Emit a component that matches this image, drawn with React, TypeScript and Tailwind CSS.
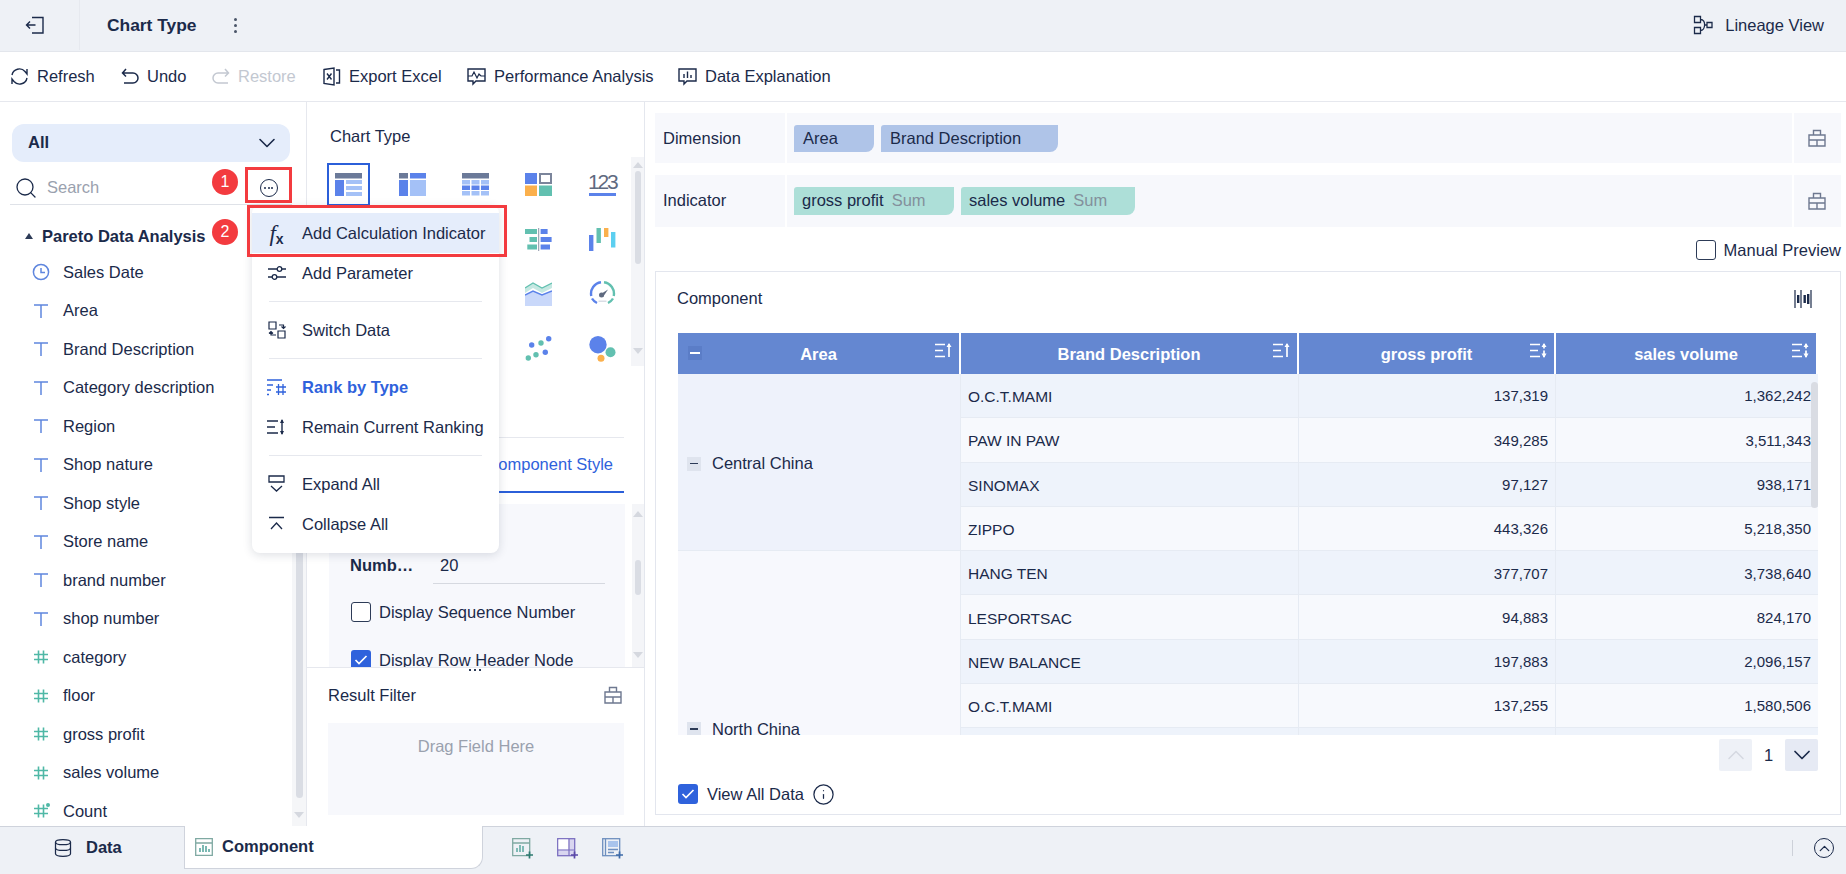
import React from "react";
import { ChevronDown, ChevronUp, Search, Database, Info } from "lucide-react";

const NAVY = "#1b2a4a";

function Svg({ w = 20, h = 20, vb, children, className }: { w?: number; h?: number; vb?: string; children: React.ReactNode; className?: string }) {
  return (
    <svg width={w} height={h} viewBox={vb || `0 0 ${w} ${h}`} fill="none" className={className}>
      {children}
    </svg>
  );
}

function TreeT() {
  return (
    <Svg w={16} h={16}>
      <path d="M1 2h14M8 2v13" stroke="#5f86de" strokeWidth="1.5" />
    </Svg>
  );
}

function TreeHash({ star }: { star?: boolean }) {
  return (
    <Svg w={17} h={16}>
      <path d="M1 5.5h14M1 10.5h14M5.5 1.5v13M10.5 1.5v13" stroke="#4fb8a6" strokeWidth="1.6" />
      {star && <circle cx="15" cy="2" r="2" fill="#4fb8a6" />}
    </Svg>
  );
}

function TreeClock() {
  return (
    <Svg w={18} h={18} className="ml-[-1px] mr-[-1px]">
      <circle cx="9" cy="9" r="7.6" stroke="#5f86de" strokeWidth="1.5" />
      <path d="M9 5v4.5H13" stroke="#5f86de" strokeWidth="1.5" />
    </Svg>
  );
}

function SortIcon({ both }: { both?: boolean }) {
  return (
    <Svg w={19} h={19}>
      <path d="M1 3.5h10M1 9.5h8M1 15.5h10" stroke="white" strokeWidth="1.7" />
      <path d="M15 16V3" stroke="white" strokeWidth="1.7" />
      <path d="M12.5 6L15 2l2.5 4z" fill="white" />
      {both && <path d="M12.5 12.5L15 17l2.5-4.5z" fill="white" />}
      {both && <path d="M13 8.5h4" stroke="#6487d1" strokeWidth="2" />}
    </Svg>
  );
}

function Filter() {
  return (
    <Svg w={18} h={18}>
      <path d="M1 6h16v11H1zM5.5 6V1.5h7V6M9 11v6M1 11h16" stroke="#6e7890" strokeWidth="1.4" />
    </Svg>
  );
}

function Check() {
  return (
    <span className="w-[20px] h-[20px] rounded-[3px] bg-[#2f62dc] flex items-center justify-center shrink-0">
      <Svg w={14} h={12}>
        <path d="M1.5 6l3.5 3.5 7.5-7.5" stroke="white" strokeWidth="1.7" />
      </Svg>
    </span>
  );
}

function Box() {
  return <span className="w-[20px] h-[20px] rounded-[3px] border border-[#2d3b57] bg-white shrink-0" />;
}

function ToolItem({ icon, label, muted, w }: { icon: React.ReactNode; label: string; muted?: boolean; w: string }) {
  return (
    <div className={`flex items-center gap-[8px] ${w} ${muted ? "text-[#c3c8d1]" : ""}`}>
      {icon}
      <span>{label}</span>
    </div>
  );
}

const fields = [
  { name: "Area", t: "t" },
  { name: "Brand Description", t: "t" },
  { name: "Category description", t: "t" },
  { name: "Region", t: "t" },
  { name: "Shop nature", t: "t" },
  { name: "Shop style", t: "t" },
  { name: "Store name", t: "t" },
  { name: "brand number", t: "t" },
  { name: "shop number", t: "t" },
  { name: "category", t: "n" },
  { name: "floor", t: "n" },
  { name: "gross profit", t: "n" },
  { name: "sales volume", t: "n" },
  { name: "Count", t: "c" },
];

const rows = [
  ["O.C.T.MAMI", "137,319", "1,362,242"],
  ["PAW IN PAW", "349,285", "3,511,343"],
  ["SINOMAX", "97,127", "938,171"],
  ["ZIPPO", "443,326", "5,218,350"],
  ["HANG TEN", "377,707", "3,738,640"],
  ["LESPORTSAC", "94,883", "824,170"],
  ["NEW BALANCE", "197,883", "2,096,157"],
  ["O.C.T.MAMI", "137,255", "1,580,506"],
  ["", "", ""],
];

const GRAY = "#6b7a99";
const BLUE = "#5b82ea";
const LIGHT = "#a4c1f7";
const TEAL = "#62c0b0";
const ORANGE = "#fbb04c";

function ChartGrid() {
  return (
    <div className="grid grid-cols-[63.4px_63.4px_63.4px_63.4px_63.4px] auto-rows-[54.8px] items-center justify-items-center w-[317px]">
      <div className="w-[43px] h-[43px] border-2 border-[#2b5fd9] flex items-center justify-center">
        <Svg w={27} h={23}>
          <rect width="27" height="5.5" fill={GRAY} />
          <rect y="7" width="9" height="16" fill={BLUE} />
          <rect x="11" y="7" width="16" height="4" fill={LIGHT} />
          <rect x="11" y="13" width="16" height="4" fill={LIGHT} />
          <rect x="11" y="19" width="16" height="4" fill={LIGHT} />
        </Svg>
      </div>
      <Svg w={27} h={23}>
        <rect width="9" height="5.5" fill={GRAY} />
        <rect x="11" width="16" height="5.5" fill={BLUE} />
        <rect y="7" width="9" height="16" fill={BLUE} />
        <rect x="11" y="7" width="16" height="16" fill={LIGHT} />
      </Svg>
      <Svg w={27} h={23}>
        <rect width="27" height="5.5" fill={GRAY} />
        {[7, 12.5, 18].map((y, i) =>
          [0, 9.5, 19].map((x) => <rect key={`${x}-${y}`} x={x} y={y} width="8" height="4.5" fill={i === 1 ? BLUE : LIGHT} />)
        )}
      </Svg>
      <Svg w={27} h={23}>
        <rect width="12" height="11" fill={BLUE} />
        <rect x="15" y="1" width="11" height="9" stroke="#7b859b" strokeWidth="2" />
        <rect y="12.5" width="12" height="10.5" fill={ORANGE} />
        <rect x="14" y="12.5" width="13" height="10.5" fill={TEAL} />
      </Svg>
      <div className="flex flex-col items-center w-[27px]">
        <span className="text-[21px] leading-[18px] tracking-[-2.2px] text-[#5f6a80] font-light">123</span>
        <span className="w-[27px] h-[3px] bg-[#5b82ea] mt-[2px]" />
      </div>

      <span />
      <span />
      <span />
      <Svg w={27} h={23}>
        <rect y="1" width="12" height="5" fill={TEAL} />
        <rect x="4.5" y="9" width="7.5" height="5" fill={TEAL} />
        <rect x="2.3" y="16.5" width="9.7" height="5" fill={TEAL} />
        <rect x="13.2" width="1" height="23" fill="#8a93a6" />
        <rect x="15.6" y="1" width="7" height="5" fill={BLUE} />
        <rect x="15.6" y="9" width="11" height="5" fill={BLUE} />
        <rect x="15.6" y="16.5" width="9.4" height="5" fill={BLUE} />
      </Svg>
      <Svg w={27} h={23}>
        <rect y="7" width="4.4" height="16" fill={BLUE} />
        <rect x="7.5" width="4.4" height="15" fill={TEAL} />
        <rect x="15" width="4.4" height="9" fill={ORANGE} />
        <rect x="22" y="4" width="4.4" height="15.5" fill="#5ccff0" />
      </Svg>

      <span />
      <span />
      <span />
      <Svg w={27} h={25}>
        <path d="M0 7l8-5 9 5 10-5v5l-10 5-9-5-8 5z" fill="#c5e8e2" />
        <path d="M0 7l8-5 9 5 10-5" stroke={TEAL} strokeWidth="1.3" />
        <path d="M0 14l8-4 9 4 10-4v15H0z" fill="#c9d8fa" />
        <path d="M0 14l8-4 9 4 10-4" stroke={BLUE} strokeWidth="1.4" />
      </Svg>
      <Svg w={27} h={27}>
        <path d="M2.3 16A11.5 11.5 0 0 1 12 2.2" stroke={BLUE} strokeWidth="2.4" />
        <path d="M15 2.2A11.5 11.5 0 0 1 24.7 16" stroke={TEAL} strokeWidth="2.4" />
        <path d="M3 18.5A11.5 11.5 0 0 0 8 23" stroke={BLUE} strokeWidth="2.4" />
        <path d="M24 18.5A11.5 11.5 0 0 1 19 23" stroke={TEAL} strokeWidth="2.4" />
        <path d="M11 14.5l8-5-5 7.5z" fill="#5f6a80" />
        <circle cx="12.5" cy="15" r="2.5" fill="#5f6a80" />
        <rect x="9.5" y="20.5" width="8" height="1.5" fill="#d9dde5" />
      </Svg>

      <span />
      <span />
      <span />
      <Svg w={27} h={25}>
        <circle cx="6.7" cy="9" r="2.7" fill={BLUE} />
        <circle cx="16" cy="7" r="2.7" fill={TEAL} />
        <circle cx="23.7" cy="2.7" r="2.7" fill={BLUE} />
        <circle cx="3.3" cy="22" r="2.7" fill={TEAL} />
        <circle cx="11" cy="18.7" r="2.7" fill={TEAL} />
        <circle cx="20.3" cy="16.3" r="2.7" fill={BLUE} />
      </Svg>
      <Svg w={27} h={26}>
        <circle cx="9" cy="8.7" r="8.7" fill={BLUE} />
        <circle cx="21.5" cy="16.3" r="5" fill={TEAL} />
        <circle cx="12" cy="22.3" r="3.5" fill={ORANGE} />
      </Svg>
    </div>
  );
}

function TableHead({ label, both, w }: { label: string; both?: boolean; w: string }) {
  return (
    <div className={`relative h-full flex items-center justify-center pt-[2px] font-bold text-white border-r-2 border-white last:border-r-0 ${w}`}>
      {label}
      <span className="absolute right-[6px] top-[8px]">
        <SortIcon both={both} />
      </span>
    </div>
  );
}

function MenuItem({ icon, label, active, blue }: { icon: React.ReactNode; label: string; active?: boolean; blue?: boolean }) {
  return (
    <div className={`flex items-center h-[40px] pl-[15px] gap-[16px] ${active ? "bg-[#e5edfb]" : ""} ${blue ? "text-[#2f62dc] font-bold" : ""}`}>
      <span className="w-[19px] flex justify-center">{icon}</span>
      <span>{label}</span>
    </div>
  );
}

function RedDot({ n, className }: { n: number; className: string }) {
  return (
    <span className={`absolute w-[26px] h-[26px] rounded-full bg-[#f33b3f] text-white text-[16px] flex items-center justify-center ${className}`}>{n}</span>
  );
}

export default function App() {
  return (
    <div className="relative w-[1846px] h-[874px] overflow-hidden bg-white font-['Liberation_Sans',Arial,sans-serif] text-[16.5px] text-[#1b2a4a]">
      {/* top bar */}
      <div className="h-[52px] bg-[#eef1f6] border-b border-[#e3e6ec] flex items-center pb-[1px]">
        <div className="w-[80px] h-full border-r border-[#e6e9ef] flex items-center justify-center pr-[9px]">
          <Svg w={20} h={20}>
            <path d="M7 2.5h11v15.5H7M1.5 10h9M5 6.5L1.5 10 5 13.5" stroke={NAVY} strokeWidth="1.4" />
          </Svg>
        </div>
        <span className="ml-[27px] font-bold text-[17.4px]">Chart Type</span>
        <span className="ml-[37px] flex flex-col gap-[3px]">
          <i className="w-[3px] h-[3px] rounded-full bg-[#4a5568]" />
          <i className="w-[3px] h-[3px] rounded-full bg-[#4a5568]" />
          <i className="w-[3px] h-[3px] rounded-full bg-[#4a5568]" />
        </span>
        <div className="ml-auto mr-[22px] flex items-center gap-[12px]">
          <Svg w={20} h={20} className="ml-[-1px]">
            <path d="M1.5 1.5h6v6h-6zM1.5 12.5h6v6h-6zM7.5 4.5c6 0 5 11-0 11M12 10h2M14 7.5h5v5h-5z" stroke={NAVY} strokeWidth="1.3" />
          </Svg>
          <span>Lineage View</span>
        </div>
      </div>

      {/* toolbar */}
      <div className="h-[50px] border-b border-[#e6e8ee] flex items-center pl-[10px]">
        <ToolItem
          w="w-[111px]"
          label="Refresh"
          icon={
            <Svg w={19} h={19}>
              <path d="M2 8a7.5 7.5 0 0 1 13-3.5L17 7V2M17 11a7.5 7.5 0 0 1-13 3.5L2 12v5" stroke={NAVY} strokeWidth="1.4" />
            </Svg>
          }
        />
        <ToolItem
          w="w-[91px]"
          label="Undo"
          icon={
            <Svg w={18} h={18}>
              <path d="M5 1L1.5 5 5 8.5M1.5 5H12a4.7 4.7 0 0 1 0 10H3" stroke={NAVY} strokeWidth="1.5" />
            </Svg>
          }
        />
        <ToolItem
          w="w-[110px]"
          muted
          label="Restore"
          icon={
            <Svg w={18} h={18}>
              <path d="M13 1l3.5 4L13 8.5M16.5 5H6a4.7 4.7 0 0 0 0 10h10" stroke="#c3c8d1" strokeWidth="1.5" />
            </Svg>
          }
        />
        <ToolItem
          w="w-[145px]"
          label="Export Excel"
          icon={
            <Svg w={19} h={19}>
              <path d="M2 2.5l10-1.5v17l-10-1.5zM14 3h3.5v13H14" stroke={NAVY} strokeWidth="1.4" />
              <path d="M5 6.5l4.5 6M9.5 6.5L5 12.5" stroke={NAVY} strokeWidth="1.4" />
            </Svg>
          }
        />
        <ToolItem
          w="w-[211px]"
          label="Performance Analysis"
          icon={
            <Svg w={19} h={19}>
              <path d="M1 2h17v12H9l-3 3v-3H1z" stroke={NAVY} strokeWidth="1.4" />
              <path d="M1 9h4l2-4 3 6 2-4 2 2h4" stroke={NAVY} strokeWidth="1.2" />
            </Svg>
          }
        />
        <ToolItem
          w="w-[170px]"
          label="Data Explanation"
          icon={
            <Svg w={19} h={19}>
              <path d="M1 2h17v12H9l-3 3v-3H1z" stroke={NAVY} strokeWidth="1.4" />
              <path d="M6 7v4M9.5 4.5V11M13 8v3" stroke={NAVY} strokeWidth="1.4" />
            </Svg>
          }
        />
      </div>

      {/* work area */}
      <div className="flex h-[724px]">
        {/* field list */}
        <div className="w-[307px] border-r border-[#e6e8ee] flex flex-col">
          <div className="mt-[22px] ml-[12px] w-[278px] h-[38px] rounded-xl bg-[#e5edfb] flex items-center justify-between pl-[16px] pr-[9px] pb-[1px] font-bold">
            All
            <ChevronDown size={28} strokeWidth={1.4} />
          </div>
          <div className="ml-[10px] w-[282px] h-[43px] border-b border-[#dfe2e8] flex items-center pl-[4px] pt-[9px] gap-[9px] text-[#9aa1ae]">
            <Search size={24} strokeWidth={1.3} className="text-[#1b2a4a]" />
            Search
          </div>
          <div className="flex flex-1 min-h-0">
            <div className="w-[292px] overflow-hidden">
              <div className="h-[47px] pt-[15px] pl-[25px] flex items-center gap-[8px] font-bold">
                <span className="w-0 h-0 border-l-[4px] border-r-[4px] border-b-[6px] border-l-transparent border-r-transparent border-b-[#2d3b57]" />
                <span className="ml-[1px]">Pareto Data Analysis</span>
              </div>
              <div className="h-[38.5px] mt-[1px] pl-[33px] flex items-center gap-[14px]">
                <TreeClock />
                Sales Date
              </div>
              {fields.map((f) => (
                <div key={f.name} className="h-[38.5px] pl-[33px] flex items-center gap-[14px]">
                  {f.t === "t" ? <TreeT /> : <TreeHash star={f.t === "c"} />}
                  <span className={f.t === "t" ? "" : "ml-[-1px]"}>{f.name}</span>
                </div>
              ))}
            </div>
            <div className="w-[14px] bg-[#f5f6f8] flex flex-col items-center">
              <span className="mt-[14px] w-[7px] h-[579px] rounded bg-[#dadde4]" />
              <span className="mt-[14px] w-0 h-0 border-l-[5px] border-r-[5px] border-t-[6px] border-l-transparent border-r-transparent border-t-[#d5d8df]" />
            </div>
          </div>
        </div>

        {/* chart type + settings */}
        <div className="relative w-[338px] border-r border-[#e4e7ee] flex flex-col">
          <div className="h-[335px]">
            <div className="pl-[23px] h-[55px] pt-[24px] leading-[20px]">Chart Type</div>
            <div className="flex">
              <div className="pl-[10px] w-[324px]">
                <ChartGrid />
              </div>
              <div className="w-[13px] h-[209px] bg-[#f4f5f8] flex flex-col items-center pt-[5px]">
                <span className="w-0 h-0 border-l-[5px] border-r-[5px] border-b-[6px] border-l-transparent border-r-transparent border-b-[#d5d8df]" />
                <span className="mt-[3px] w-[6px] h-[93px] rounded bg-[#dadde4]" />
                <span className="mt-[84px] w-0 h-0 border-l-[5px] border-r-[5px] border-t-[6px] border-l-transparent border-r-transparent border-t-[#d5d8df]" />
              </div>
            </div>
          </div>
          <div className="ml-[23px] w-[294px] h-[56px] border-t border-b-2 border-t-[#e6e8ee] border-b-[#2b5fd9] flex items-center justify-end pr-[11px] text-[#2f62dc]">
            Component Style
          </div>
          <div className="mt-[11px] flex h-[163px] overflow-hidden">
            <div className="ml-[22px] w-[296px] bg-[#f7f8fc] pl-[22px] pt-[48px]">
              <div className="flex items-center h-[26px]">
                <span className="font-bold w-[82px] ml-[-1px]">Numb…</span>
                <span className="ml-[8px]">20</span>
              </div>
              <div className="ml-[82px] w-[172px] h-px bg-[#d6d9e0] mt-[5px]" />
              <div className="mt-[16px] flex items-center gap-[8px]">
                <Box />
                Display Sequence Number
              </div>
              <div className="mt-[23px] flex items-center gap-[8px]">
                <Check />
                Display Row Header Node
              </div>
            </div>
            <div className="ml-[7px] w-[12px] bg-[#f4f5f8] flex flex-col items-center pt-[7px]">
              <span className="w-0 h-0 border-l-[5px] border-r-[5px] border-b-[6px] border-l-transparent border-r-transparent border-b-[#d5d8df]" />
              <span className="mt-[43px] w-[6px] h-[35px] rounded bg-[#dadde4]" />
              <span className="mt-[57px] w-0 h-0 border-l-[5px] border-r-[5px] border-t-[6px] border-l-transparent border-r-transparent border-t-[#d5d8df]" />
            </div>
          </div>
          <div className="relative border-t border-[#e6e8ee] flex-1 pl-[21px] pr-[22px]">
            <span className="absolute left-[162px] top-[1px] flex gap-[3px]">
              <i className="w-[2px] h-[2px] bg-[#2d3b57]" />
              <i className="w-[2px] h-[2px] bg-[#2d3b57]" />
              <i className="w-[2px] h-[2px] bg-[#2d3b57]" />
            </span>
            <div className="h-[55px] flex items-center justify-between pb-[1px]">
              Result Filter
              <Filter />
            </div>
            <div className="h-[92px] w-[296px] bg-[#f7f8fc] text-center text-[#9aa1ae] pt-[11px]">Drag Field Here</div>
          </div>
        </div>

        {/* preview */}
        <div className="flex-1 pl-[10px] pr-[6px] pt-[11px]">
          <div className="h-[50px] bg-[#f7f8fc] flex items-center">
            <span className="w-[130px] pl-[8px] shrink-0">Dimension</span>
            <span className="w-[2px] h-full bg-white mr-[7px]" />
            <span className="h-[27px] w-[80px] bg-[#afc4e8] rounded-tl-[3px] rounded-br-lg pl-[9px] flex items-center">Area</span>
            <span className="ml-[7px] h-[27px] w-[177px] bg-[#afc4e8] rounded-tl-[3px] rounded-br-lg pl-[9px] flex items-center">Brand Description</span>
            <span className="ml-auto w-[2px] h-full bg-white" />
            <span className="w-[47px] flex justify-center pr-[2px]">
              <Filter />
            </span>
          </div>
          <div className="mt-[12px] h-[52px] bg-[#f7f8fc] flex items-center">
            <span className="w-[130px] pl-[8px] shrink-0 pb-[1px]">Indicator</span>
            <span className="w-[2px] h-full bg-white mr-[7px]" />
            <span className="h-[28px] w-[160px] bg-[#addfd8] rounded-tl-[3px] rounded-br-lg pl-[8px] pb-[1px] flex items-center gap-[8px]">
              gross profit <span className="text-[#83909c]">Sum</span>
            </span>
            <span className="ml-[7px] h-[28px] w-[174px] bg-[#addfd8] rounded-tl-[3px] rounded-br-lg pl-[8px] pb-[1px] flex items-center gap-[8px]">
              sales volume <span className="text-[#83909c]">Sum</span>
            </span>
            <span className="ml-auto w-[2px] h-full bg-white" />
            <span className="w-[47px] flex justify-center pr-[2px]">
              <Filter />
            </span>
          </div>
          <div className="h-[44px] flex items-center justify-end gap-[8px] pt-[2px]">
            <Box />
            Manual Preview
          </div>
          <div className="h-[544px] border border-[#e3e6ee] pl-[22px] pr-[22px]">
            <div className="h-[61px] flex items-center justify-between pr-[6px] pb-[8px] ml-[-1px]">
              Component
              <Svg w={18} h={18}>
                <path d="M1 0v18M17 0v18M7 0v18" stroke={NAVY} strokeWidth="1.2" />
                <rect x="3" y="5" width="2.4" height="8" fill={NAVY} />
                <rect x="9.5" y="5" width="2.4" height="8" fill={NAVY} />
                <rect x="13" y="4" width="2.4" height="10" fill={NAVY} />
              </Svg>
            </div>

            <div className="relative w-[1140px]">
              <div className="h-[41px] bg-[#6487d1] flex">
                <TableHead w="w-[283px]" label="Area" />
                <TableHead w="w-[338px]" label="Brand Description" />
                <TableHead w="w-[257px]" label="gross profit" both />
                <TableHead w="w-[262px]" label="sales volume" both />
                <span className="absolute left-[10px] top-[13px] w-[14px] h-[14px] flex items-center justify-center bg-[#5b7dc7]">
                  <i className="w-[10px] h-[1.5px] bg-white" />
                </span>
              </div>
              <div className="relative flex h-[361px] overflow-hidden">
                <div className="w-[283px] shrink-0 border-r border-[#e6ebf3]">
                  <div className="h-[177px] bg-[#eef2fb] flex items-center pl-[9px] pt-[3px] gap-[11px] border-b border-[#e6ebf3]">
                    <span className="w-[14px] h-[14px] bg-[#dfe4ee] flex items-center justify-center">
                      <i className="w-[8px] h-[1.5px] bg-[#2d3b57]" />
                    </span>
                    Central China
                  </div>
                  <div className="h-[356px] bg-[#f7f8fd] flex items-center pl-[9px] gap-[11px]">
                    <span className="w-[14px] h-[14px] bg-[#dfe4ee] flex items-center justify-center">
                      <i className="w-[8px] h-[1.5px] bg-[#2d3b57]" />
                    </span>
                    North China
                  </div>
                </div>
                <div className="flex-1">
                  {rows.map((r, i) => (
                    <div key={i} className={`flex h-[44.3px] border-b border-[#e6ebf3] ${i % 2 === 0 ? "bg-[#eef3fb]" : "bg-[#f7f9fd]"}`}>
                      <div className="w-[338px] shrink-0 border-r border-[#e6ebf3] pl-[7px] pt-[2px] text-[15.5px] flex items-center">{r[0]}</div>
                      <div className="w-[257px] shrink-0 border-r border-[#e6ebf3] pr-[7px] pt-[2px] text-[15px] flex items-center justify-end">{r[1]}</div>
                      <div className="flex-1 pr-[7px] pt-[2px] text-[15px] flex items-center justify-end">{r[2]}</div>
                    </div>
                  ))}
                </div>
                <span className="absolute right-0 top-[8px] w-[7px] h-[126px] rounded bg-[#d9dce3]" />
              </div>
            </div>

            <div className="flex items-start justify-end w-[1140px] mt-[4px]">
              <span className="w-[33px] h-[32px] rounded-[2px] bg-[#eef1f7] flex items-center justify-center text-[#d5d9e1]">
                <ChevronUp size={28} strokeWidth={1.3} />
              </span>
              <span className="w-[33px] h-[32px] flex items-center justify-center">1</span>
              <span className="w-[33px] h-[32px] rounded-[2px] bg-[#e6eaf4] flex items-center justify-center">
                <ChevronDown size={28} strokeWidth={1.5} />
              </span>
            </div>
            <div className="flex items-center gap-[9px] mt-[11px]">
              <Check />
              View All Data
              <Info size={23} strokeWidth={1.3} className="ml-[-1px]" />
            </div>
          </div>
        </div>
      </div>

      {/* bottom tabs */}
      <div className="h-[48px] bg-[#eef1f6] border-t border-[#cfd3dc] flex">
        <div className="w-[184px] flex items-center pl-[54px] pb-[6px] gap-[14px] font-bold">
          <Database size={20} strokeWidth={1.5} className="ml-[-1px] mr-[-1px]" />
          Data
        </div>
        <div className="w-[299px] h-[43px] mt-[-1px] bg-white border-l border-b border-r border-[#cfd3dc] rounded-br-xl flex items-center pl-[10px] pb-[1px] gap-[9px] font-bold">
          <Svg w={18} h={18}>
            <path d="M.7.7h16.6v16.6H.7zM.7 5h16.6" stroke="#7fa9a2" strokeWidth="1.3" />
            <path d="M5 14v-4M8 14V7M11 14v-6M14 14v-3" stroke="#5aa8a0" strokeWidth="1.6" />
          </Svg>
          Component
        </div>
        <div className="flex items-center ml-[29px] pb-[5px] gap-[24px]">
          <Svg w={21} h={21}>
            <path d="M.7.7h17v17H.7zM.7 5h17" stroke="#7fa9a2" strokeWidth="1.3" />
            <path d="M5 14v-4M8 14V7M11 14v-6" stroke="#5aa8a0" strokeWidth="1.5" />
            <path d="M14 17h7M17.5 13.5v7" stroke="#2e7a70" strokeWidth="1.7" />
          </Svg>
          <Svg w={21} h={21}>
            <rect x=".7" y=".7" width="17" height="17" fill="#d9d6f0" stroke="#7b6fc0" strokeWidth="1.3" />
            <rect x="1.5" y="1.5" width="10" height="10" fill="white" />
            <path d="M12 1v17M1 12h17" stroke="#7b6fc0" strokeWidth="1.2" />
            <path d="M14 17h7M17.5 13.5v7" stroke="#5a48a8" strokeWidth="1.7" />
          </Svg>
          <Svg w={21} h={21}>
            <rect x=".7" y=".7" width="17" height="17" fill="#eef1f6" stroke="#6d8fbf" strokeWidth="1.3" />
            <rect x="6" y="3" width="10" height="6" fill="#a9c4ec" />
            <path d="M3.5 1v17M6 11.5h10M6 14.5h6" stroke="#6d8fbf" strokeWidth="1.3" />
            <path d="M14 17h7M17.5 13.5v7" stroke="#3e6ba8" strokeWidth="1.7" />
          </Svg>
        </div>
        <div className="ml-auto flex items-center mr-[12px] pb-[5px] gap-[21px]">
          <span className="w-px h-[16px] bg-[#cdd1d9]" />
          <span className="w-[20px] h-[20px] rounded-full border-[1.5px] border-[#1b2a4a] flex items-center justify-center">
            <ChevronUp size={17} strokeWidth={1.8} />
          </span>
        </div>
      </div>

      {/* add-field menu */}
      <div className="absolute left-[252px] top-[205px] w-[247px] h-[348px] rounded-lg bg-white shadow-[0_2px_10px_rgba(30,40,70,0.15)] pt-[8px]">
        <MenuItem
          active
          label="Add Calculation Indicator"
          icon={<span className="italic font-['Liberation_Serif',serif] text-[23px] leading-none">f<sub className="text-[14px] font-bold not-italic font-['Liberation_Sans',sans-serif]">x</sub></span>}
        />
        <MenuItem
          label="Add Parameter"
          icon={
            <Svg w={18} h={18}>
              <path d="M0 5h9M14 5h4M0 13h4M9 13h9" stroke={NAVY} strokeWidth="1.3" />
              <circle cx="11.5" cy="5" r="2.3" stroke={NAVY} strokeWidth="1.3" />
              <circle cx="6.5" cy="13" r="2.3" stroke={NAVY} strokeWidth="1.3" />
            </Svg>
          }
        />
        <div className="mx-[17px] my-[8px] h-px bg-[#e6e8ee]" />
        <MenuItem
          label="Switch Data"
          icon={
            <Svg w={18} h={18}>
              <path d="M1 1h7v7H1zM10 10h7v7h-7zM11 4h4.5v3M13.5 5.5l2 2 2-2M8 14H3v-3M1 12.5l2-2 2 2" stroke={NAVY} strokeWidth="1.2" />
            </Svg>
          }
        />
        <div className="mx-[17px] my-[8px] h-px bg-[#e6e8ee]" />
        <MenuItem
          blue
          label="Rank by Type"
          icon={
            <Svg w={19} h={18}>
              <path d="M0 2h15M0 7h6M0 12h4M0 16.5h2" stroke="#2f62dc" strokeWidth="1.4" />
              <path d="M9 9h10M9 14h10M11.5 6v11M16 6v11" stroke="#2f62dc" strokeWidth="1.3" />
            </Svg>
          }
        />
        <MenuItem
          label="Remain Current Ranking"
          icon={
            <Svg w={19} h={18}>
              <path d="M0 3h11M0 9h8M0 15h11" stroke={NAVY} strokeWidth="1.4" />
              <path d="M15 2v14" stroke={NAVY} strokeWidth="1.4" />
              <path d="M13 5l2-4 2 4zM13 13l2 4 2-4z" fill={NAVY} />
            </Svg>
          }
        />
        <div className="mx-[17px] my-[8px] h-px bg-[#e6e8ee]" />
        <MenuItem
          label="Expand All"
          icon={
            <Svg w={17} h={18}>
              <path d="M1 1h15v6H1zM3 11l5.5 5 5.5-5" stroke={NAVY} strokeWidth="1.3" />
            </Svg>
          }
        />
        <MenuItem
          label="Collapse All"
          icon={
            <Svg w={17} h={16}>
              <path d="M1 1.5h15M3 13l5.5-6 5.5 6" stroke={NAVY} strokeWidth="1.3" />
            </Svg>
          }
        />
      </div>

      {/* annotations */}
      <div className="absolute left-[245px] top-[167px] w-[47px] h-[36px] border-[3px] border-[#f33b3f] flex items-center justify-center pt-[6px]">
        <span className="w-[18px] h-[18px] rounded-full border-[1.3px] border-[#1b2a4a] flex items-center justify-center gap-[1.5px]">
          <i className="w-[2px] h-[2px] rounded-full bg-[#1b2a4a]" />
          <i className="w-[2px] h-[2px] rounded-full bg-[#1b2a4a]" />
          <i className="w-[2px] h-[2px] rounded-full bg-[#1b2a4a]" />
        </span>
      </div>
      <div className="absolute left-[247px] top-[205px] w-[260px] h-[52px] border-[3px] border-[#f33b3f]" />
      <RedDot n={1} className="left-[212px] top-[169px]" />
      <RedDot n={2} className="left-[212px] top-[219px]" />
    </div>
  );
}
